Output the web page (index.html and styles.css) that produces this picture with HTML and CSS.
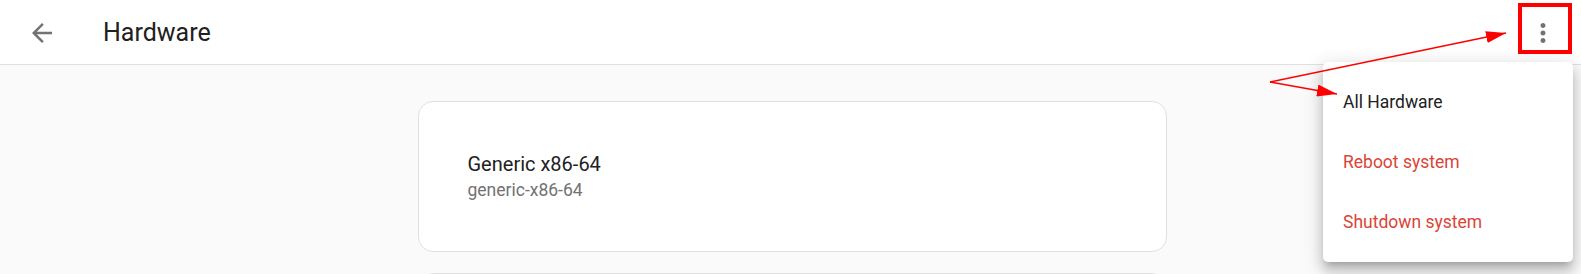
FILE: index.html
```html
<!DOCTYPE html>
<html lang="en">
<head>
<meta charset="utf-8">
<title>Hardware</title>
<link rel="stylesheet" href="styles.css">
</head>
<body>
<div class="app">
  <header class="toolbar">
    <button class="icon-btn back" aria-label="Back">
      <svg viewBox="0 0 24 24" width="30" height="30"><path d="M20 11H7.83l5.59-5.59L12 4l-8 8 8 8 1.41-1.41L7.83 13H20v-2z" fill="currentColor"/></svg>
    </button>
    <div class="title">Hardware</div>
    <button class="icon-btn more" aria-label="Menu">
      <svg viewBox="0 0 24 24" width="30" height="30"><path d="M12 8c1.1 0 2-.9 2-2s-.9-2-2-2-2 .9-2 2 .9 2 2 2zm0 2c-1.1 0-2 .9-2 2s.9 2 2 2 2-.9 2-2-.9-2-2-2zm0 6c-1.1 0-2 .9-2 2s.9 2 2 2 2-.9 2-2-.9-2-2-2z" fill="currentColor"/></svg>
    </button>
  </header>
  <main class="content">
    <div class="cards">
      <section class="card">
        <div class="board">
          <div class="primary">Generic x86-64</div>
          <div class="secondary">generic-x86-64</div>
        </div>
      </section>
      <section class="card second"></section>
    </div>
  </main>
  <ul class="menu">
    <li class="item">All Hardware</li>
    <li class="item danger">Reboot system</li>
    <li class="item danger">Shutdown system</li>
  </ul>
  <svg class="annot" width="1581" height="274" viewBox="0 0 1581 274">
    <defs>
      <marker id="ah" viewBox="0 0 20 12" refX="20" refY="6" markerWidth="20" markerHeight="12" markerUnits="userSpaceOnUse" orient="auto">
        <path d="M0 0 L20 6 L0 12 z" fill="#ff0000"/>
      </marker>
    </defs>
    <line x1="1270" y1="82" x2="1506" y2="33" stroke="#ff0000" stroke-width="1.6" marker-end="url(#ah)"/>
    <line x1="1270" y1="82" x2="1337" y2="94" stroke="#ff0000" stroke-width="1.6" marker-end="url(#ah)"/>
    <rect x="1520" y="5" width="50" height="47" fill="none" stroke="#ff0000" stroke-width="4"/>
  </svg>
</div>
</body>
</html>
```
FILE: styles.css
```css
* { box-sizing: border-box; }
html, body {
  margin: 0;
  padding: 0;
  height: 274px;
  overflow: hidden;
  background: #fafafa;
  font-family: Roboto, "Noto Sans", sans-serif;
}
.app {
  position: relative;
  width: 1581px;
  height: 274px;
  overflow: hidden;
}
.toolbar {
  display: flex;
  align-items: center;
  height: 65px;
  padding: 1px 8px 0 12px;
  background: #ffffff;
  border-bottom: 1px solid #e0e0e0;
}
.icon-btn {
  display: flex;
  align-items: center;
  justify-content: center;
  width: 60px;
  height: 60px;
  padding: 0;
  border: 0;
  background: transparent;
  color: #727272;
}
.title {
  margin-left: 31px;
  flex: 1;
  font-size: 25px;
  color: #212121;
  font-weight: 400;
}
.content {
  padding: 36px 0 0 3px;
}
.cards {
  display: flex;
  flex-direction: column;
  align-items: center;
  gap: 21px;
}
.card {
  width: 749px;
  height: 151px;
  background: #ffffff;
  border: 1px solid #e0e0e0;
  border-radius: 15px;
  display: flex;
  align-items: center;
  padding: 2px 0 0 49px;
}
.board {
  display: flex;
  flex-direction: column;
}
.primary {
  font-size: 20px;
  line-height: 25px;
  color: #212121;
}
.secondary {
  font-size: 17.5px;
  line-height: 27px;
  color: #727272;
}
.menu {
  position: absolute;
  top: 62px;
  left: 1323px;
  width: 250px;
  margin: 0;
  padding: 10px 0;
  list-style: none;
  background: #ffffff;
  border-radius: 5px;
  box-shadow: 0 6px 6px -4px rgba(0,0,0,.2), 0 10px 12px 1px rgba(0,0,0,.14), 0 4px 18px 3px rgba(0,0,0,.12);
}
.item {
  height: 60px;
  display: flex;
  align-items: center;
  padding-left: 20px;
  font-size: 17.5px;
  color: #212121;
}
.item.danger {
  color: #db4437;
}
.annot {
  position: absolute;
  top: 0;
  left: 0;
  pointer-events: none;
}
```
